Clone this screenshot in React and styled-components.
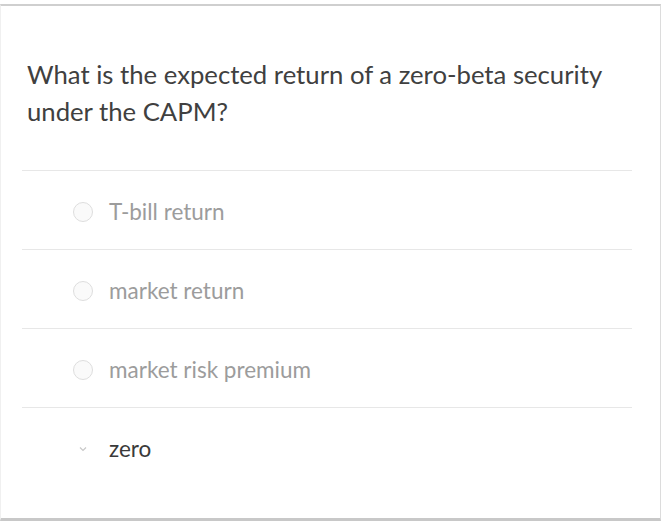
import React from 'react'
import styled, { createGlobalStyle } from 'styled-components'

const Global = createGlobalStyle`
 html, body { margin: 0; padding: 0; background: #fff; }
 body { font-family: Lato, "Open Sans", sans-serif; }
`
const Frame = styled.div`
 box-sizing: border-box;
 width: 663px;
 height: 521px;
 padding-top: 4px;
 background: #fff;
`
const Card = styled.div`
 box-sizing: border-box;
 height: 517px;
 margin-right: 2px;
 border-top: 2px solid #cfcfcf;
 border-right: 1px solid #dcdcdc;
 border-bottom: 3px solid #c8c8c8;
 border-left: 1px solid #f0f0f0;
 padding: 50px 28px 0 21px;
`
const Question = styled.p`
 margin: 0 0 40px 5px;
 font-size: 25.7px;
 line-height: 37px;
 color: #404040;
`
const List = styled.div`
 display: flex;
 flex-direction: column;
`
const Row = styled.label`
 display: flex;
 align-items: center;
 height: 79px;
 padding: 3px 0 0 51px;
 box-sizing: border-box;
 border-top: 1px solid #e7e7e7;
 gap: 16px;
`
const Radio = styled.span`
 width: 20px;
 height: 20px;
 border-radius: 50%;
 border: 1px solid #dedede;
 box-sizing: border-box;
 background: #fafafa;
`
const Check = styled.span`
 width: 20px;
 display: flex;
 justify-content: center;
`
const Label = styled.span`
 font-size: 22.5px;
 color: ${p => p.picked ? '#3a3a3a' : '#9c9c9c'};
`

const options = ['T-bill return', 'market return', 'market risk premium', 'zero']

export default function App() {
 return (
  <Frame>
   <Global />
   <Card>
    <Question>What is the expected return of a zero-beta security under the CAPM?</Question>
    <List>
     {options.map(o => (
      <Row key={o}>
       {o === 'zero' ? (
        <Check>
         <svg width="8" height="6" viewBox="0 0 8 6">
          <path d="M1 1.5 L4 4.5 L7 1.5" fill="none" stroke="#c8c8c8" strokeWidth="1.2" />
         </svg>
        </Check>
       ) : <Radio />}
       <Label picked={o === 'zero'}>{o}</Label>
      </Row>
     ))}
    </List>
   </Card>
  </Frame>
 )
}
